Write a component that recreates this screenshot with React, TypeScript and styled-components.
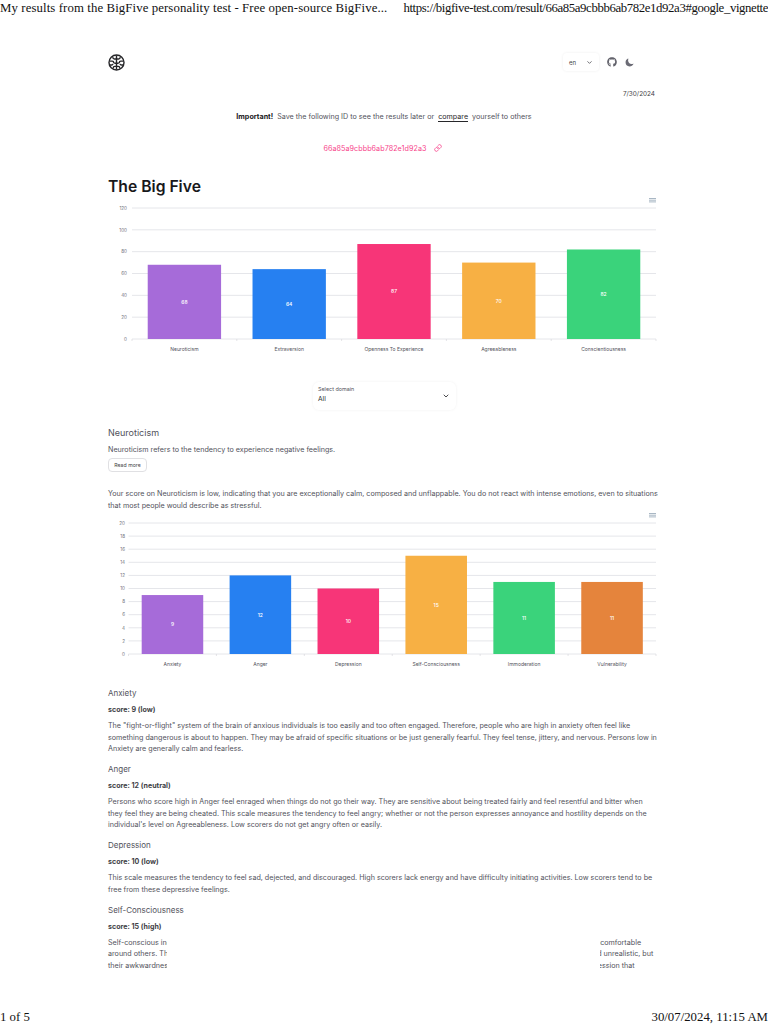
import React from "react";
import styled, { createGlobalStyle } from "styled-components";
import { ChevronDown, Link } from "lucide-react";
import { FaGithub } from "react-icons/fa";
import { IoMoon } from "react-icons/io5";

const GlobalStyle = createGlobalStyle`
  html, body {
    margin: 0;
    padding: 0;
    background: #fff;
  }
  body {
    font-family: "Inter", "Liberation Sans", sans-serif;
    color: #3f3f46;
  }
`;

type Bar = { label: string; value: number; color: string };

const PURPLE = "#a66bd9";
const BLUE = "#2680f1";
const PINK = "#f73578";
const ORANGE = "#f7b044";
const GREEN = "#3ad37b";
const BROWN = "#e5843c";

const domains: Bar[] = [
  { label: "Neuroticism", value: 68, color: PURPLE },
  { label: "Extraversion", value: 64, color: BLUE },
  { label: "Openness To Experience", value: 87, color: PINK },
  { label: "Agreeableness", value: 70, color: ORANGE },
  { label: "Conscientiousness", value: 82, color: GREEN },
];

const facets: Bar[] = [
  { label: "Anxiety", value: 9, color: PURPLE },
  { label: "Anger", value: 12, color: BLUE },
  { label: "Depression", value: 10, color: PINK },
  { label: "Self-Consciousness", value: 15, color: ORANGE },
  { label: "Immoderation", value: 11, color: GREEN },
  { label: "Vulnerability", value: 11, color: BROWN },
];

type ChartProps = {
  data: Bar[];
  max: number;
  step: number;
  left: number;
  labelX: number;
  plotHeight: number;
  height: number;
  barRatio: number;
};

const CHART_RIGHT = 548;

const BarChart = ({ data, max, step, left, labelX, plotHeight, height, barRatio }: ChartProps) => {
  const top = 11;
  const base = top + plotHeight;
  const slot = (CHART_RIGHT - left) / data.length;
  const ticks: number[] = [];
  for (let v = 0; v <= max; v += step) ticks.push(v);

  return (
    <svg width={552} height={height} viewBox={`0 0 552 ${height}`}>
      <g stroke="#a9b7c4" strokeWidth={1}>
        <line x1={541} x2={548} y1={1.5} y2={1.5} />
        <line x1={541} x2={548} y1={3.2} y2={3.2} />
        <line x1={541} x2={548} y1={4.9} y2={4.9} />
      </g>
      {ticks.map((v) => {
        const y = base - (v / max) * plotHeight;
        return (
          <g key={v}>
            <line x1={left} x2={CHART_RIGHT} y1={y} y2={y} stroke="#e5e6ea" strokeWidth={1} />
            <text x={labelX} y={y + 1.7} textAnchor="end" fontSize={4.6} fill="#71717a">
              {v}
            </text>
          </g>
        );
      })}
      {data.map((d, i) => {
        const w = slot * barRatio;
        const x = left + slot * i + (slot - w) / 2;
        const h = (d.value / max) * plotHeight;
        return (
          <g key={d.label}>
            <rect x={x} y={base - h} width={w} height={h} fill={d.color} />
            <text
              x={x + w / 2}
              y={base - h / 2 + 1.8}
              textAnchor="middle"
              fontSize={5}
              fontWeight={500}
              fill="#fff"
            >
              {d.value}
            </text>
            <text x={x + w / 2} y={base + 12} textAnchor="middle" fontSize={5} fill="#52525b">
              {d.label}
            </text>
            <line
              x1={left + slot * i}
              x2={left + slot * i}
              y1={base}
              y2={base + 2}
              stroke="#d4d4d8"
              strokeWidth={0.6}
            />
          </g>
        );
      })}
      <line x1={CHART_RIGHT} x2={CHART_RIGHT} y1={base} y2={base + 2} stroke="#d4d4d8" strokeWidth={0.6} />
    </svg>
  );
};

const BrainLogo = () => (
  <svg width={17} height={17} viewBox="0 0 24 24" fill="none" stroke="#27272a" strokeWidth={2}>
    <circle cx={12} cy={12} r={10.6} />
    <path d="M12 2v20" />
    <path d="M12 7H9a2 2 0 0 1-2-2.500M2.500 10H6a2 2 0 0 1 2 2v1M12 13H9M2.500 15.500H5a2 2 0 0 0 2-1.500M12 17.500H9.500a2 2 0 0 0-2 2v1" />
    <path d="M12 7h3a2 2 0 0 0 2-2.500M21.500 10H18a2 2 0 0 0-2 2v1M12 13h3M21.500 15.500H19a2 2 0 0 1-2-1.500M12 17.500h2.500a2 2 0 0 1 2 2v1" />
  </svg>
);

export default function App() {
  return (
    <Page>
      <GlobalStyle />
      <PrintLine>
        <PrintTitle>My results from the BigFive personality test - Free open-source BigFive...</PrintTitle>
        <PrintUrl>https://bigfive-test.com/result/66a85a9cbbb6ab782e1d92a3#google_vignette</PrintUrl>
      </PrintLine>

      <Main>
        <Nav>
          <BrainLogo />
          <NavTools>
            <LangSelect>
              en
              <ChevronDown size={7} strokeWidth={2.5} />
            </LangSelect>
            <FaGithub size={10} color="#63636c" />
            <IoMoon size={9} color="#6b6b75" />
          </NavTools>
        </Nav>

        <DateLine>7/30/2024</DateLine>

        <Notice>
          <strong>Important!</strong>&nbsp; Save the following ID to see the results later or&nbsp;{" "}
          <CompareLink>compare</CompareLink>&nbsp; yourself to others
        </Notice>

        <IdLine>
          66a85a9cbbb6ab782e1d92a3
          <Link size={8} strokeWidth={2.4} />
        </IdLine>

        <Title>The Big Five</Title>
        <BarChart
          data={domains}
          max={120}
          step={20}
          left={24}
          labelX={19}
          plotHeight={131}
          height={162}
          barRatio={0.7}
        />

        <DomainSelect>
          <DomainText>
            <DomainLabel>Select domain</DomainLabel>
            <DomainValue>All</DomainValue>
          </DomainText>
          <ChevronDown size={8} strokeWidth={2.5} color="#27272a" />
        </DomainSelect>

        <DomainHeading>Neuroticism</DomainHeading>
        <DomainIntro>Neuroticism refers to the tendency to experience negative feelings.</DomainIntro>
        <ReadMore>Read more</ReadMore>
        <ScoreText>
          Your score on Neuroticism is low, indicating that you are exceptionally calm, composed and
          unflappable. You do not react with intense emotions, even to situations that most people
          would describe as stressful.
        </ScoreText>

        <ChartGap>
          <BarChart
            data={facets}
            max={20}
            step={2}
            left={20.5}
            labelX={17}
            plotHeight={131}
            height={162.5}
            barRatio={0.7}
          />
        </ChartGap>

        <Facet>
          <FacetHeading>Anxiety</FacetHeading>
          <Score>score: 9 (low)</Score>
          <Text>
            The "fight-or-flight" system of the brain of anxious individuals is too easily and too often
            engaged. Therefore, people who are high in anxiety often feel like something dangerous is
            about to happen. They may be afraid of specific situations or be just generally fearful. They
            feel tense, jittery, and nervous. Persons low in Anxiety are generally calm and fearless.
          </Text>
        </Facet>

        <Facet>
          <FacetHeading>Anger</FacetHeading>
          <Score>score: 12 (neutral)</Score>
          <Text>
            Persons who score high in Anger feel enraged when things do not go their way. They are
            sensitive about being treated fairly and feel resentful and bitter when they feel they are
            being cheated. This scale measures the tendency to feel angry; whether or not the person
            expresses annoyance and hostility depends on the individual's level on Agreeableness. Low
            scorers do not get angry often or easily.
          </Text>
        </Facet>

        <Facet>
          <FacetHeading>Depression</FacetHeading>
          <Score>score: 10 (low)</Score>
          <Text>
            This scale measures the tendency to feel sad, dejected, and discouraged. High scorers lack
            energy and have difficulty initiating activities. Low scorers tend to be free from these
            depressive feelings.
          </Text>
        </Facet>

        <Facet>
          <FacetHeading>Self-Consciousness</FacetHeading>
          <Score>score: 15 (high)</Score>
          <Covered>
            <Text>
              Self-conscious individuals are sensitive about what others think of them. Their concern
              about rejection and ridicule cause them to feel shy and uncomfortable around others. They
              are easily embarrassed and often feel ashamed. Their fears that others will criticize or
              make fun of them are exaggerated and unrealistic, but their awkwardness and discomfort may
              make these fears a self-fulfilling prophecy. Low scorers, in contrast, do not suffer from
              the mistaken impression that
            </Text>
            <AdCover />
          </Covered>
        </Facet>
      </Main>

      <PrintFooter>
        <span>1 of 5</span>
        <span>30/07/2024, 11:15 AM</span>
      </PrintFooter>
    </Page>
  );
}

const Page = styled.div`
  width: 768px;
  height: 1024px;
  display: flex;
  flex-direction: column;
  overflow: hidden;
  background: #fff;
`;

const PrintLine = styled.div`
  display: flex;
  justify-content: space-between;
  height: 17px;
  line-height: 17px;
  font-family: "Liberation Serif", serif;
  font-size: 12.8px;
  color: #111;
  white-space: nowrap;
`;

const PrintTitle = styled.span`
  letter-spacing: 0.1px;
`;

const PrintUrl = styled.span`
  letter-spacing: -0.39px;
`;

const Main = styled.main`
  flex: 1;
  width: 552px;
  margin-left: 108px;
  padding-top: 36px;
  min-height: 0;
`;

const Nav = styled.nav`
  display: flex;
  align-items: center;
  justify-content: space-between;
  height: 18px;
  padding-right: 26px;
`;

const NavTools = styled.div`
  display: flex;
  align-items: center;
  gap: 8px;
`;

const LangSelect = styled.div`
  width: 36px;
  height: 18px;
  box-sizing: border-box;
  padding: 0 6px;
  display: flex;
  align-items: center;
  justify-content: space-between;
  border-radius: 4px;
  background: #fff;
  box-shadow: 0 0 3px rgba(0, 0, 0, 0.07);
  font-size: 6px;
  color: #3f3f46;
`;

const DateLine = styled.div`
  margin-top: 18.5px;
  padding-right: 5px;
  text-align: right;
  font-size: 6.4px;
  line-height: 9px;
  color: #3f3f46;
`;

const Notice = styled.p`
  margin: 12.5px 0 0;
  text-align: center;
  font-size: 7.17px;
  line-height: 11px;
  color: #52525b;
  strong {
    font-weight: 700;
    color: #18181b;
  }
`;

const CompareLink = styled.span`
  color: #27272a;
  border-bottom: 1px solid #27272a;
`;

const IdLine = styled.div`
  margin-top: 20.5px;
  padding-right: 3px;
  display: flex;
  align-items: center;
  justify-content: center;
  gap: 7px;
  font-size: 7.2px;
  line-height: 11px;
  letter-spacing: 0.05px;
  color: #f7438a;
`;

const Title = styled.h1`
  margin: 22px 0 0;
  font-size: 15.7px;
  line-height: 21px;
  font-weight: 600;
  color: #18181b;
`;

const DomainSelect = styled.div`
  width: 143px;
  height: 28px;
  margin: 19px 0 0 205px;
  box-sizing: border-box;
  padding: 0 6px 0 5px;
  display: flex;
  align-items: center;
  justify-content: space-between;
  border-radius: 6px;
  background: #fff;
  box-shadow: 0 0 3px rgba(0, 0, 0, 0.06);
`;

const DomainText = styled.div`
  display: flex;
  flex-direction: column;
  gap: 2px;
  padding-bottom: 3px;
`;

const DomainLabel = styled.span`
  font-size: 5.4px;
  line-height: 7px;
  color: #52525b;
`;

const DomainValue = styled.span`
  font-size: 6.6px;
  line-height: 8px;
  color: #27272a;
`;

const DomainHeading = styled.h2`
  margin: 16px 0 0;
  font-size: 9px;
  line-height: 14px;
  font-weight: 400;
  color: #52525b;
`;

const Text = styled.p`
  margin: 5px 0 0;
  max-width: 551px;
  font-size: 7.17px;
  line-height: 11.5px;
  color: #52525b;
`;

const DomainIntro = styled(Text)`
  margin-top: 4px;
`;

const ReadMore = styled.button`
  display: block;
  width: 39px;
  height: 14px;
  margin-top: 3px;
  padding: 0;
  border: 1px solid #e0e0e3;
  border-radius: 4px;
  background: #fff;
  font-family: inherit;
  font-size: 5.2px;
  color: #3f3f46;
`;

const ScoreText = styled(Text)`
  margin-top: 16px;
`;

const ChartGap = styled.div`
  margin-top: 1px;
`;

const Facet = styled.section`
  margin-top: 8.5px;
`;

const FacetHeading = styled.h3`
  margin: 0;
  font-size: 8px;
  line-height: 12px;
  font-weight: 400;
  color: #52525b;
`;

const Score = styled.div`
  margin-top: 6px;
  font-size: 7.1px;
  line-height: 10px;
  font-weight: 700;
  color: #3f3f46;
`;

const Covered = styled.div`
  position: relative;
`;

const AdCover = styled.div`
  position: absolute;
  top: 0;
  bottom: 0;
  left: 59px;
  width: 433px;
  background: #fff;
`;

const PrintFooter = styled.footer`
  display: flex;
  justify-content: space-between;
  height: 17px;
  margin-bottom: -2px;
  line-height: 17px;
  font-family: "Liberation Serif", serif;
  font-size: 12.8px;
  color: #111;
  white-space: nowrap;
`;
